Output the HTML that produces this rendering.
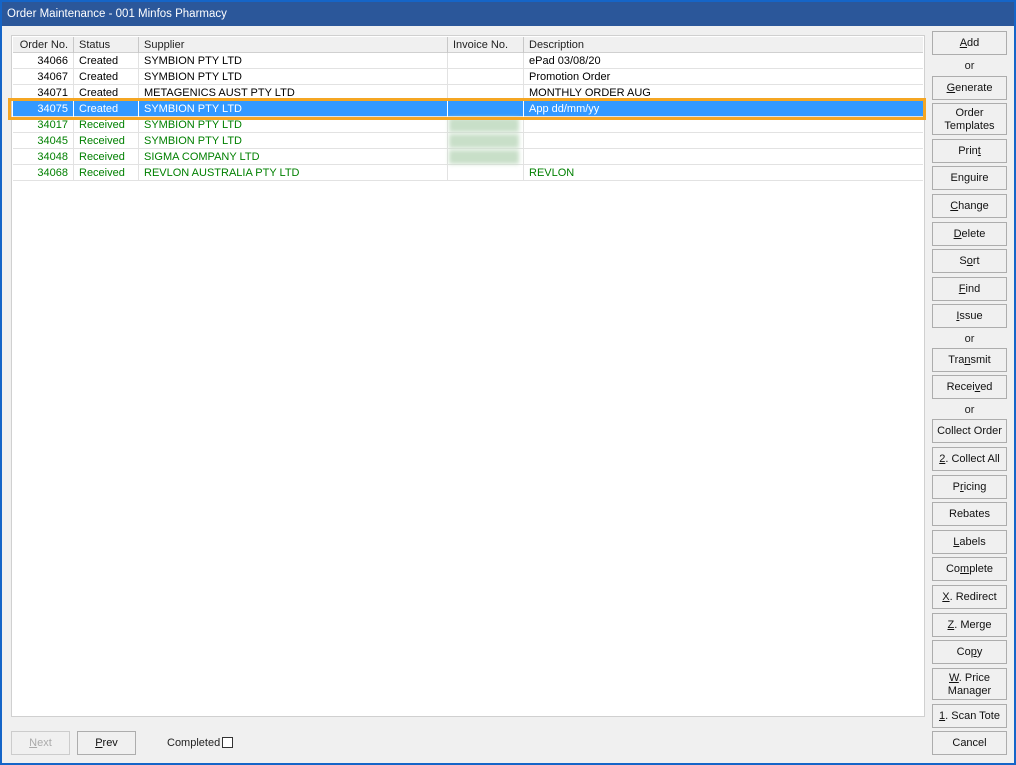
<!DOCTYPE html>
<html><head><style>
*{box-sizing:border-box;margin:0;padding:0}
body{width:1016px;height:765px;position:relative;background:#1565c8;font-family:"Liberation Sans",sans-serif;font-size:11px;overflow:hidden}
#win{position:absolute;left:2px;top:2px;width:1012px;height:761px;background:#f0f0f0}
#title{position:absolute;left:0;top:0;width:1012px;height:24px;background:#2b579a;color:#fff;font-size:11.5px;line-height:24px;padding-left:5px}
#list{position:absolute;left:9px;top:33px;width:914px;height:682px;background:#fff;border:1px solid #d0d0d0}
.row{position:absolute;left:1px;height:16px;width:910px;border-bottom:1px solid #e2e2e2;line-height:16px}
.c{position:absolute;top:0;height:16px;border-right:1px solid #e2e2e2;padding:0 5px;white-space:nowrap;overflow:hidden}
.hdr{background:#f0f0f0;border-bottom:1px solid #d0d0d0;color:#222}
.hdr .c{border-right:1px solid #c8c8c8}
.g{color:#008000}
.sel{background:#3399ff;color:#fff}
.sel .c{border-right:1px solid #fff}
.btn{position:absolute;left:930px;width:75px;height:24px;border:1px solid #adadad;background:#f0f0f0;text-align:center;line-height:23px;color:#111;font-size:11px}
.two{line-height:13px;padding-top:3px}
.or{position:absolute;left:930px;width:75px;text-align:center;color:#222}
.blur{position:absolute;left:447px;width:70px;height:14px;background:#c8dfc8;filter:blur(2px)}
</style></head><body><div id="win">
<div id="title">Order Maintenance - 001 Minfos Pharmacy</div>
<div id="list">
<div class="row hdr" style="top:1px"><div class="c" style="left:0;width:61px;text-align:right">Order No.</div><div class="c" style="left:61px;width:65px">Status</div><div class="c" style="left:126px;width:309px">Supplier</div><div class="c" style="left:435px;width:76px">Invoice No.</div><div class="c" style="left:511px;width:399px;border-right:none">Description</div></div>
</div>
<div id="rows"></div>
<div style="position:absolute;left:6px;top:96px;width:918px;height:22px;border:3px solid #f5a623;"></div>
<div class="btn" style="top:29px"><u>A</u>dd</div>
<div class="or" style="top:58px">or</div>
<div class="btn" style="top:74px"><u>G</u>enerate</div>
<div class="btn two" style="top:101px;height:32px">Order<br>Templates</div>
<div class="btn" style="top:137px">Prin<u>t</u></div>
<div class="btn" style="top:164px">Enguire</div>
<div class="btn" style="top:192px"><u>C</u>hange</div>
<div class="btn" style="top:220px"><u>D</u>elete</div>
<div class="btn" style="top:247px">S<u>o</u>rt</div>
<div class="btn" style="top:275px"><u>F</u>ind</div>
<div class="btn" style="top:302px"><u>I</u>ssue</div>
<div class="or" style="top:331px">or</div>
<div class="btn" style="top:346px">Tra<u>n</u>smit</div>
<div class="btn" style="top:373px">Recei<u>v</u>ed</div>
<div class="or" style="top:402px">or</div>
<div class="btn" style="top:417px">Collect Order</div>
<div class="btn" style="top:445px"><u>2</u>. Collect All</div>
<div class="btn" style="top:473px">P<u>r</u>icing</div>
<div class="btn" style="top:500px">Rebates</div>
<div class="btn" style="top:528px"><u>L</u>abels</div>
<div class="btn" style="top:555px">Co<u>m</u>plete</div>
<div class="btn" style="top:583px"><u>X</u>. Redirect</div>
<div class="btn" style="top:611px"><u>Z</u>. Merge</div>
<div class="btn" style="top:638px">Co<u>p</u>y</div>
<div class="btn two" style="top:666px;height:32px"><u>W</u>. Price<br>Manager</div>
<div class="btn" style="top:702px"><u>1</u>. Scan Tote</div>
<div class="btn" style="top:729px">Cancel</div>
<div class="btn" style="left:9px;width:59px;top:729px;color:#aaa;border-color:#ccc"><u>N</u>ext</div>
<div class="btn" style="left:75px;width:59px;top:729px"><u>P</u>rev</div>
<div style="position:absolute;left:165px;top:735px;color:#222">Completed</div>
<div style="position:absolute;left:220px;top:735px;width:11px;height:11px;border:1px solid #333;background:#fff"></div>
</div>
<script>
var d=[["34066","Created","SYMBION PTY LTD","ePad 03/08/20",""],["34067","Created","SYMBION PTY LTD","Promotion Order",""],["34071","Created","METAGENICS AUST PTY LTD","MONTHLY ORDER AUG",""],["34075","Created","SYMBION PTY LTD","App dd/mm/yy","sel"],["34017","Received","SYMBION PTY LTD","","g"],["34045","Received","SYMBION PTY LTD","","g"],["34048","Received","SIGMA COMPANY LTD","","g"],["34068","Received","REVLON AUSTRALIA PTY LTD","REVLON","g"]];
var h="";d.forEach(function(r,i){var t=51+16*i;h+='<div class="row '+r[4]+'" style="left:11px;top:'+t+'px"><div class="c" style="left:0;width:61px;text-align:right">'+r[0]+'</div><div class="c" style="left:61px;width:65px">'+r[1]+'</div><div class="c" style="left:126px;width:309px">'+r[2]+'</div><div class="c" style="left:435px;width:76px"></div><div class="c" style="left:511px;width:399px;border-right:none">'+r[3]+'</div></div>';if(r[4]=="g"&&i<7)h+='<div class="blur" style="top:'+(t+1)+'px"></div>';});
document.getElementById("rows").innerHTML=h;
</script>
</body></html>
